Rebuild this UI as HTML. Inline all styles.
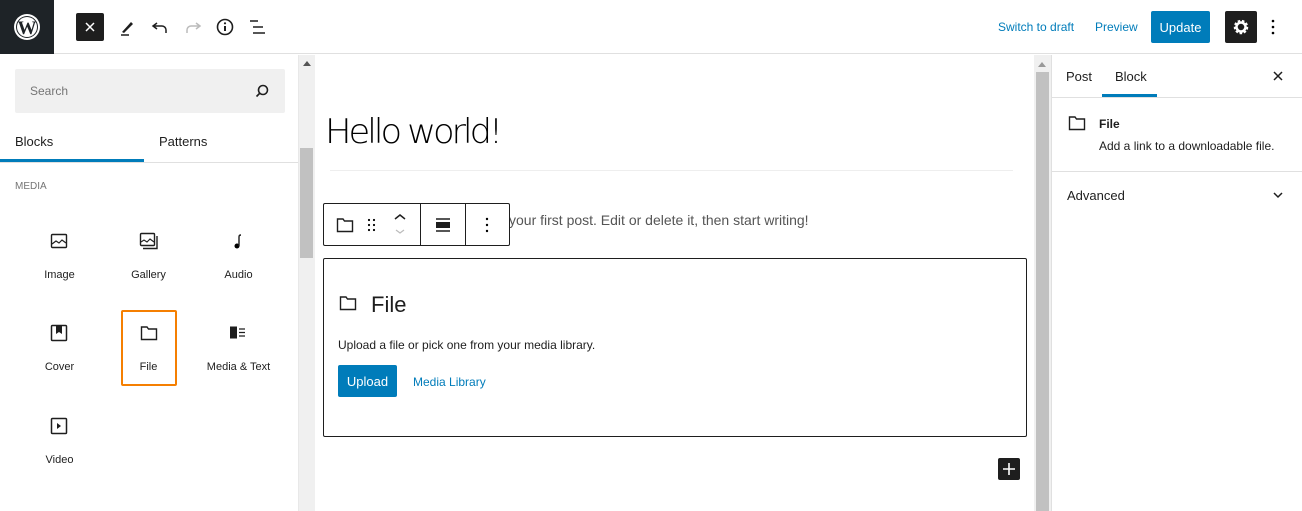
<!DOCTYPE html>
<html><head><meta charset="utf-8"><style>
*{box-sizing:border-box;margin:0;padding:0}
body{width:1302px;height:511px;overflow:hidden;background:#fff;font-family:"Liberation Sans",sans-serif;color:#1e1e1e;position:relative;font-size:13px}
.a{position:absolute}
svg{display:block}
</style></head><body>
<!-- top bar -->
<div class="a" style="left:0;top:0;width:1302px;height:54px;border-bottom:1px solid #e0e0e0"></div>
<div class="a" style="left:0;top:0;width:54px;height:54px;background:#1e2327">
<svg width="54" height="54" viewBox="0 0 54 54"><circle cx="27" cy="27" r="13" fill="#fff"/><circle cx="27" cy="27" r="11" fill="#1e2327"/><circle cx="27" cy="27" r="10" fill="#fff"/><text x="27" y="34" text-anchor="middle" font-family="Liberation Serif" font-weight="bold" font-size="19" fill="#1e2327">W</text></svg></div>
<div class="a" style="left:76px;top:13px;width:28px;height:28px;background:#1e1e1e;border-radius:2px">
<svg width="28" height="28" viewBox="0 0 28 28"><path d="M10 10 L18 18 M18 10 L10 18" stroke="#fff" stroke-width="1.5"/></svg></div>
<svg class="a" style="left:116px;top:16px" width="22" height="22" viewBox="0 0 22 22"><path d="M6 16 L15 6 L17 8 L8 17 Z" fill="#1e1e1e"/><path d="M5 19h8" stroke="#1e1e1e" stroke-width="1.5"/></svg>
<svg class="a" style="left:149px;top:16px" width="22" height="22" viewBox="0 0 22 22"><path d="M8 7 L4 10 L8 13 M4 10 H13 A4 4 0 0 1 17 14 V17" fill="none" stroke="#1e1e1e" stroke-width="1.5"/></svg>
<svg class="a" style="left:182px;top:16px" width="22" height="22" viewBox="0 0 22 22"><path d="M14 7 L18 10 L14 13 M18 10 H9 A4 4 0 0 0 5 14 V17" fill="none" stroke="#bbb" stroke-width="1.5"/></svg>
<svg class="a" style="left:214px;top:16px" width="22" height="22" viewBox="0 0 22 22"><circle cx="11" cy="11" r="7.5" fill="none" stroke="#1e1e1e" stroke-width="1.6"/><path d="M11 10v5" stroke="#1e1e1e" stroke-width="2"/><circle cx="11" cy="7.3" r="1.1" fill="#1e1e1e"/></svg>
<svg class="a" style="left:247px;top:16px" width="22" height="22" viewBox="0 0 22 22"><path d="M3 5h8M6 11h10M6 17h12" stroke="#1e1e1e" stroke-width="1.6"/></svg>
<div class="a" style="left:998px;top:20px;color:#007cba;font-size:12px">Switch to draft</div>
<div class="a" style="left:1095px;top:20px;color:#007cba;font-size:12px">Preview</div>
<div class="a" style="left:1151px;top:11px;width:59px;height:32px;background:#007cba;color:#fff;border-radius:2px;text-align:center;line-height:33px">Update</div>
<div class="a" style="left:1225px;top:11px;width:32px;height:32px;background:#1e1e1e;border-radius:2px">
<svg width="32" height="32" viewBox="0 0 32 32"><circle cx="16" cy="16" r="5.5" fill="none" stroke="#fff" stroke-width="3.5" stroke-dasharray="2.2 1.6"/><circle cx="16" cy="16" r="4.5" fill="none" stroke="#fff" stroke-width="2.5"/></svg></div>
<svg class="a" style="left:1266px;top:16px" width="14" height="22" viewBox="0 0 14 22"><circle cx="7" cy="5" r="1.3"/><circle cx="7" cy="11" r="1.3"/><circle cx="7" cy="17" r="1.3"/></svg>

<!-- left panel -->
<div class="a" style="left:15px;top:69px;width:270px;height:44px;background:#f0f0f0;border-radius:2px"></div>
<div class="a" style="left:30px;top:84px;color:#757575;font-size:12px">Search</div>
<svg class="a" style="left:254px;top:83px" width="16" height="16" viewBox="0 0 16 16"><circle cx="9" cy="7" r="4.5" fill="none" stroke="#1e1e1e" stroke-width="1.6"/><path d="M6 10 L2.5 13.5" stroke="#1e1e1e" stroke-width="1.6"/></svg>
<div class="a" style="left:15px;top:134px">Blocks</div>
<div class="a" style="left:159px;top:134px">Patterns</div>
<div class="a" style="left:0;top:162px;width:298px;height:1px;background:#e0e0e0"></div>
<div class="a" style="left:0;top:159px;width:144px;height:3px;background:#007cba"></div>
<div class="a" style="left:15px;top:181px;font-size:10px;color:#757575">MEDIA</div>
<!-- scrollbar left -->
<div class="a" style="left:298px;top:55px;width:17px;height:456px;background:#f0f0f0;border-left:1px solid #e8e8e8"></div>
<div class="a" style="left:300px;top:148px;width:13px;height:110px;background:#c1c1c1"></div>
<div class="a" style="left:303px;top:61px;width:0;height:0;border-left:4px solid transparent;border-right:4px solid transparent;border-bottom:5px solid #555"></div>
<!-- block icons -->
<svg class="a" style="left:50px;top:232px" width="18" height="18" viewBox="0 0 18 18"><rect x="1.5" y="2.5" width="15" height="13" rx="1" fill="none" stroke="#1e1e1e" stroke-width="1.4"/><path d="M2 12 L6 9 L9 11 L12 8 L16 11" fill="none" stroke="#1e1e1e" stroke-width="1.2"/></svg>
<svg class="a" style="left:139px;top:232px" width="20" height="20" viewBox="0 0 20 20"><rect x="1.5" y="1.5" width="14" height="12" rx="1" fill="none" stroke="#1e1e1e" stroke-width="1.4"/><path d="M2 10 L5 8 L8 10 L11 7 L15 10" fill="none" stroke="#1e1e1e" stroke-width="1.1"/><path d="M4 16.5 H18 V4" fill="none" stroke="#1e1e1e" stroke-width="1.4"/></svg>
<svg class="a" style="left:229px;top:232px" width="18" height="18" viewBox="0 0 18 18"><circle cx="8" cy="14" r="2.5"/><path d="M10 14 V5 Q10 3 12 3" fill="none" stroke="#1e1e1e" stroke-width="1.4"/></svg>
<div class="a" style="left:0;top:269px;width:119px;text-align:center;font-size:11px">Image</div>
<div class="a" style="left:89px;top:269px;width:119px;text-align:center;font-size:11px">Gallery</div>
<div class="a" style="left:179px;top:269px;width:119px;text-align:center;font-size:11px">Audio</div>
<svg class="a" style="left:50px;top:324px" width="18" height="18" viewBox="0 0 18 18"><rect x="1.5" y="1.5" width="15" height="15" rx="1" fill="none" stroke="#1e1e1e" stroke-width="1.5"/><path d="M6 2 V10 L9 8 L12 10 V2Z" fill="#1e1e1e"/></svg>
<div class="a" style="left:121px;top:310px;width:56px;height:76px;border:2px solid #f57f01;border-radius:2px"></div>
<svg class="a" style="left:140px;top:324px" width="18" height="18" viewBox="0 0 18 18"><path d="M1.5 3 H7 L8.5 5 H16.5 V15.5 H1.5 Z" fill="none" stroke="#1e1e1e" stroke-width="1.4"/></svg>
<svg class="a" style="left:229px;top:325px" width="20" height="16" viewBox="0 0 20 16"><rect x="1" y="1.5" width="7" height="12" fill="#1e1e1e"/><path d="M10 4h6M10 7.5h6M10 11h6" stroke="#1e1e1e" stroke-width="1.3"/></svg>
<div class="a" style="left:0;top:361px;width:119px;text-align:center;font-size:11px">Cover</div>
<div class="a" style="left:89px;top:361px;width:119px;text-align:center;font-size:11px">File</div>
<div class="a" style="left:179px;top:361px;width:119px;text-align:center;font-size:11px">Media &amp; Text</div>
<svg class="a" style="left:50px;top:417px" width="18" height="18" viewBox="0 0 18 18"><rect x="1.5" y="1.5" width="15" height="15" rx="1" fill="none" stroke="#1e1e1e" stroke-width="1.5"/><path d="M7 6 L11 9 L7 12Z" fill="#1e1e1e"/></svg>
<div class="a" style="left:0;top:454px;width:119px;text-align:center;font-size:11px">Video</div>

<!-- editor -->
<div class="a" style="left:325px;top:112px;font-size:34px;font-weight:200;color:#000;letter-spacing:-3px;font-family:'DejaVu Sans ExtraLight','DejaVu Sans',sans-serif;transform:scaleX(1.04);transform-origin:0 0;white-space:nowrap">Hello world!</div>
<div class="a" style="left:330px;top:170px;width:683px;height:1px;background:#eee"></div>
<div class="a" style="left:509px;top:212px;font-size:14px;color:#555">your first post. Edit or delete it, then start writing!</div>
<div class="a" style="left:323px;top:203px;width:187px;height:43px;border:1px solid #1e1e1e;background:#fff;border-radius:2px"></div>
<div class="a" style="left:420px;top:203px;width:1px;height:43px;background:#1e1e1e"></div>
<div class="a" style="left:465px;top:203px;width:1px;height:43px;background:#1e1e1e"></div>
<svg class="a" style="left:336px;top:216px" width="18" height="18" viewBox="0 0 18 18"><path d="M1.5 3 H7 L8.5 5 H16.5 V15.5 H1.5 Z" fill="none" stroke="#1e1e1e" stroke-width="1.4"/></svg>
<svg class="a" style="left:366px;top:217px" width="12" height="16" viewBox="0 0 12 16"><circle cx="3" cy="3" r="1.1"/><circle cx="8" cy="3" r="1.1"/><circle cx="3" cy="8" r="1.1"/><circle cx="8" cy="8" r="1.1"/><circle cx="3" cy="13" r="1.1"/><circle cx="8" cy="13" r="1.1"/></svg>
<svg class="a" style="left:392px;top:212px" width="16" height="26" viewBox="0 0 16 26"><path d="M3 7 L8 3 L13 7" fill="none" stroke="#1e1e1e" stroke-width="1.5"/><path d="M4 18 L8 21 L12 18" fill="none" stroke="#bbb" stroke-width="1.2"/></svg>
<svg class="a" style="left:434px;top:216px" width="18" height="18" viewBox="0 0 18 18"><path d="M2 3h14M2 15h14" stroke="#1e1e1e" stroke-width="1.4"/><rect x="2" y="6" width="14" height="6" fill="#1e1e1e"/></svg>
<svg class="a" style="left:480px;top:216px" width="14" height="18" viewBox="0 0 14 18"><circle cx="7" cy="3" r="1.2"/><circle cx="7" cy="9" r="1.2"/><circle cx="7" cy="15" r="1.2"/></svg>

<div class="a" style="left:323px;top:258px;width:704px;height:179px;border:1px solid #1e1e1e;border-radius:2px"></div>
<svg class="a" style="left:339px;top:295px" width="18" height="16" viewBox="0 0 18 16"><path d="M1.5 2 H7 L8.5 4 H16.5 V14.5 H1.5 Z" fill="none" stroke="#1e1e1e" stroke-width="1.4"/></svg>
<div class="a" style="left:371px;top:292px;font-size:22px">File</div>
<div class="a" style="left:338px;top:338px;font-size:12px">Upload a file or pick one from your media library.</div>
<div class="a" style="left:338px;top:365px;width:59px;height:32px;background:#007cba;color:#fff;border-radius:2px;text-align:center;line-height:33px;font-size:13px">Upload</div>
<div class="a" style="left:413px;top:375px;color:#007cba;font-size:12px">Media Library</div>
<div class="a" style="left:998px;top:458px;width:22px;height:22px;background:#1e1e1e;border-radius:2px">
<svg width="22" height="22" viewBox="0 0 22 22"><path d="M11 5v12M5 11h12" stroke="#fff" stroke-width="1.6"/></svg></div>

<!-- editor scrollbar -->
<div class="a" style="left:1034px;top:55px;width:17px;height:456px;background:#f0f0f0"></div>
<div class="a" style="left:1036px;top:72px;width:13px;height:439px;background:#c1c1c1"></div>
<div class="a" style="left:1038px;top:62px;width:0;height:0;border-left:4px solid transparent;border-right:4px solid transparent;border-bottom:5px solid #999"></div>

<!-- sidebar -->
<div class="a" style="left:1051px;top:55px;width:1px;height:456px;background:#e0e0e0"></div>
<div class="a" style="left:1066px;top:69px">Post</div>
<div class="a" style="left:1115px;top:69px">Block</div>
<div class="a" style="left:1102px;top:94px;width:55px;height:3px;background:#007cba"></div>
<div class="a" style="left:1052px;top:97px;width:250px;height:1px;background:#e0e0e0"></div>
<svg class="a" style="left:1271px;top:69px" width="14" height="14" viewBox="0 0 14 14"><path d="M3 3 L11 11 M11 3 L3 11" stroke="#1e1e1e" stroke-width="1.5"/></svg>
<svg class="a" style="left:1068px;top:115px" width="18" height="16" viewBox="0 0 18 16"><path d="M1.5 2 H7 L8.5 4 H16.5 V14.5 H1.5 Z" fill="none" stroke="#1e1e1e" stroke-width="1.4"/></svg>
<div class="a" style="left:1099px;top:117px;font-size:12px;font-weight:bold">File</div>
<div class="a" style="left:1099px;top:139px;font-size:12px">Add a link to a downloadable file.</div>
<div class="a" style="left:1052px;top:171px;width:250px;height:1px;background:#e0e0e0"></div>
<div class="a" style="left:1067px;top:188px">Advanced</div>
<svg class="a" style="left:1272px;top:190px" width="12" height="10" viewBox="0 0 12 10"><path d="M2 3 L6 7 L10 3" fill="none" stroke="#1e1e1e" stroke-width="1.5"/></svg>
</body></html>
